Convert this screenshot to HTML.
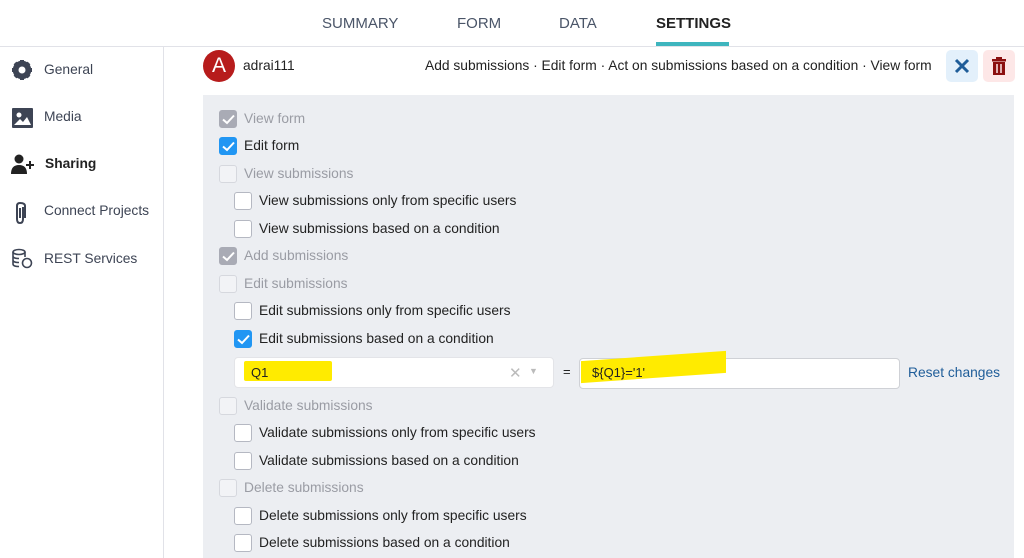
<!DOCTYPE html>
<html><head><style>
body{margin:0;width:1024px;height:558px;overflow:hidden;background:#fff;font-family:"Liberation Sans",sans-serif;font-size:13.8px;color:#222;position:relative}
.a{position:absolute}
.tab{position:absolute;top:15px;font-size:15px;color:#4a5568}
.cb{position:absolute;width:18px;height:18px;border:1px solid #b5b8c2;border-radius:3px;background:#fff;box-sizing:border-box}
.cb.dis{background:#f2f3f6;border-color:#d6d8de}
.cb.gr{background:#a9abb5;border-color:#a9abb5}
.cb.bl{background:#2196f3;border-color:#2196f3}
.cb svg{position:absolute;left:2px;top:3px}
.lb{position:absolute;font-size:13.8px;color:#222}
.lb.g{color:#9a9ca4}
.nav{position:absolute;left:44px;font-size:13.8px;color:#3d4454}
</style></head><body>
<div class="tab" style="left:322px">SUMMARY</div>
<div class="tab" style="left:457px">FORM</div>
<div class="tab" style="left:559px">DATA</div>
<div class="tab" style="left:656px;font-weight:bold;color:#222">SETTINGS</div>
<div class="a" style="left:656px;top:42px;width:73px;height:4px;background:#3eb5be"></div>
<div class="a" style="left:0;top:46px;width:1024px;height:1px;background:#e1e2e8"></div>
<div class="a" style="left:163px;top:47px;width:1px;height:511px;background:#e1e2e8"></div>

<svg class="a" style="left:11px;top:59px" width="22" height="22" viewBox="0 0 22 22"><circle cx="11" cy="11" r="7" fill="none" stroke="#3d4454" stroke-width="4.5"/><g stroke="#3d4454" stroke-width="4"><line x1="11" y1="1" x2="11" y2="21"/><line x1="1" y1="11" x2="21" y2="11"/><line x1="4" y1="4" x2="18" y2="18"/><line x1="18" y1="4" x2="4" y2="18"/></g><circle cx="11" cy="11" r="3.5" fill="#fff"/></svg>
<div class="nav" style="top:62px">General</div>
<svg class="a" style="left:12px;top:108px" width="21" height="20"><rect x="0" y="0" width="21" height="20" rx="1" fill="#3d4454"/><circle cx="7" cy="7" r="2.5" fill="#fff"/><path d="M2 17 L8 11 L11 14 L15 9 L19 17 Z" fill="#fff"/></svg>
<div class="nav" style="top:109px">Media</div>
<svg class="a" style="left:11px;top:154px" width="24" height="22"><circle cx="8" cy="5" r="4.5" fill="#222"/><path d="M0 20 Q0 11 8 11 Q16 11 16 20 Z" fill="#222"/><path d="M19 7v8M15 11h8" stroke="#222" stroke-width="2"/></svg>
<div class="nav" style="top:156px;left:45px;font-weight:bold;color:#222">Sharing</div>
<svg class="a" style="left:14px;top:201px" width="14" height="24"><path d="M9 6 V18 Q9 22 6 22 Q3 22 3 18 V5 Q3 2 6 2 Q11 2 11 5 V17" fill="none" stroke="#3d4454" stroke-width="2"/><path d="M6 7 V17" stroke="#3d4454" stroke-width="2"/></svg>
<div class="nav" style="top:203px">Connect Projects</div>
<svg class="a" style="left:11px;top:248px" width="24" height="22"><ellipse cx="8" cy="4" rx="6" ry="2.5" fill="none" stroke="#3d4454" stroke-width="1.6"/><path d="M2 4v12q0 2.5 6 2.5M14 4v5M2 8q0 2.5 6 2.5M2 12q0 2.5 6 2.5" fill="none" stroke="#3d4454" stroke-width="1.6"/><circle cx="16" cy="15" r="4.5" fill="none" stroke="#3d4454" stroke-width="1.6"/></svg>
<div class="nav" style="top:251px">REST Services</div>

<div class="a" style="left:203px;top:50px;width:32px;height:32px;border-radius:50%;background:#b71c1c;color:#fff;font-size:21px;text-align:center;line-height:32px">A</div>
<div class="a" style="left:243px;top:58px">adrai111</div>
<div class="a" style="left:425px;top:58px">Add submissions · Edit form · Act on submissions based on a condition · View form</div>
<div class="a" style="left:946px;top:50px;width:32px;height:32px;border-radius:5px;background:#e3f0fb"><svg width="32" height="32"><path d="M10 10L22 22M22 10L10 22" stroke="#1f5d99" stroke-width="3"/></svg></div>
<div class="a" style="left:983px;top:50px;width:32px;height:32px;border-radius:5px;background:#fde7e7"><svg width="32" height="32"><rect x="9" y="9" width="14" height="2.5" fill="#8b0f0f"/><rect x="13" y="7" width="6" height="2" fill="#8b0f0f"/><rect x="10" y="12" width="12" height="13" fill="#8b0f0f"/><path d="M14 14v9M18 14v9" stroke="#fde7e7" stroke-width="1.5"/></svg></div>

<div class="a" style="left:203px;top:95px;width:811px;height:463px;background:#eceef2"></div>

<div class="cb gr" style="left:219px;top:110px"><svg width="13" height="11"><path d="M1 5.5L5 9L12 1.5" fill="none" stroke="#fff" stroke-width="2"/></svg></div><div class="lb g" style="left:244px;top:111px">View form</div>
<div class="cb bl" style="left:219px;top:137px"><svg width="13" height="11"><path d="M1 5.5L5 9L12 1.5" fill="none" stroke="#fff" stroke-width="2"/></svg></div><div class="lb" style="left:244px;top:138px">Edit form</div>
<div class="cb dis" style="left:219px;top:165px"></div><div class="lb g" style="left:244px;top:166px">View submissions</div>
<div class="cb" style="left:234px;top:192px"></div><div class="lb" style="left:259px;top:193px">View submissions only from specific users</div>
<div class="cb" style="left:234px;top:220px"></div><div class="lb" style="left:259px;top:221px">View submissions based on a condition</div>
<div class="cb gr" style="left:219px;top:247px"><svg width="13" height="11"><path d="M1 5.5L5 9L12 1.5" fill="none" stroke="#fff" stroke-width="2"/></svg></div><div class="lb g" style="left:244px;top:248px">Add submissions</div>
<div class="cb dis" style="left:219px;top:275px"></div><div class="lb g" style="left:244px;top:276px">Edit submissions</div>
<div class="cb" style="left:234px;top:302px"></div><div class="lb" style="left:259px;top:303px">Edit submissions only from specific users</div>
<div class="cb bl" style="left:234px;top:330px"><svg width="13" height="11"><path d="M1 5.5L5 9L12 1.5" fill="none" stroke="#fff" stroke-width="2"/></svg></div><div class="lb" style="left:259px;top:331px">Edit submissions based on a condition</div>

<div class="a" style="left:234px;top:357px;width:320px;height:31px;background:#fff;border:1px solid #e3e4e8;border-radius:4px;box-sizing:border-box"></div>
<div class="a" style="left:244px;top:361px;width:88px;height:20px;background:#ffeb00;border-radius:2px"></div>
<div class="a" style="left:251px;top:365px;font-size:13px">Q1</div>
<div class="a" style="left:509px;top:364px;color:#bbb;font-size:15px">✕</div>
<div class="a" style="left:529px;top:366px;color:#bbb;font-size:9px">▼</div>
<div class="a" style="left:563px;top:364px;font-size:13px">=</div>
<div class="a" style="left:579px;top:358px;width:321px;height:31px;background:#fff;border:1px solid #cfd1d6;border-radius:4px;box-sizing:border-box"></div>
<div class="a" style="left:581px;top:356px;width:145px;height:22px;background:#ffeb00;transform:skewY(-4deg)"></div>
<div class="a" style="left:592px;top:365px;font-size:13px">${Q1}='1'</div>
<div class="a" style="left:908px;top:365px;color:#1f5d99">Reset changes</div>

<div class="cb dis" style="left:219px;top:397px"></div><div class="lb g" style="left:244px;top:398px">Validate submissions</div>
<div class="cb" style="left:234px;top:424px"></div><div class="lb" style="left:259px;top:425px">Validate submissions only from specific users</div>
<div class="cb" style="left:234px;top:452px"></div><div class="lb" style="left:259px;top:453px">Validate submissions based on a condition</div>
<div class="cb dis" style="left:219px;top:479px"></div><div class="lb g" style="left:244px;top:480px">Delete submissions</div>
<div class="cb" style="left:234px;top:507px"></div><div class="lb" style="left:259px;top:508px">Delete submissions only from specific users</div>
<div class="cb" style="left:234px;top:534px"></div><div class="lb" style="left:259px;top:535px">Delete submissions based on a condition</div>
</body></html>
